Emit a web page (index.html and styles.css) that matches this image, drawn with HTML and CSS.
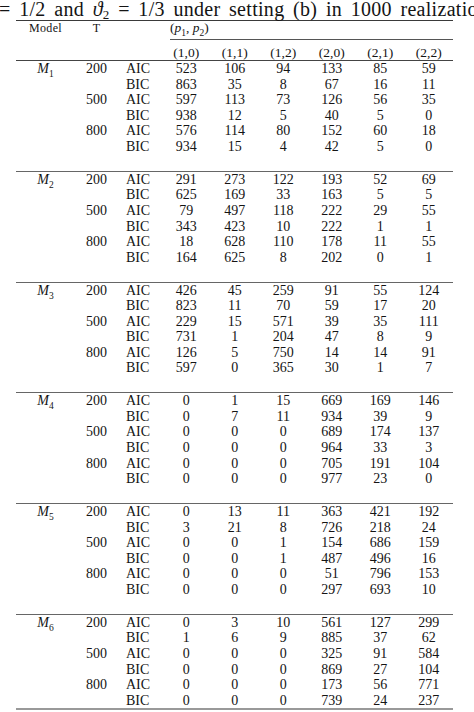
FILE: index.html
```html
<!DOCTYPE html>
<html>
<head>
<meta charset="utf-8">
<link rel="stylesheet" href="styles.css">
</head>
<body>
<div class="title">= 1/2 and <i>ϑ</i><sub>2</sub> = 1/3 under setting (b) in 1000 realizations</div>
<table class="tbl">
  <colgroup>
    <col class="c-model"><col class="c-t"><col class="c-crit">
    <col class="c-num"><col class="c-num"><col class="c-num"><col class="c-num"><col class="c-num"><col class="c-num">
  </colgroup>
  <thead>
    <tr class="h1">
      <th class="small">Model</th><th class="small">T</th><th></th>
      <th colspan="6" class="pp"><div class="pp-in">(<i>p</i><sub>1</sub>, <i>p</i><sub>2</sub>)</div></th>
    </tr>
    <tr class="h2">
      <th></th><th></th><th></th>
      <th>(1,0)</th><th>(1,1)</th><th>(1,2)</th><th>(2,0)</th><th>(2,1)</th><th>(2,2)</th>
    </tr>
  </thead>
  <tbody id="body"></tbody>
</table>
<script src="app.js"></script>
</body>
</html>
```
FILE: app.js
```js
const data = [
  [[523,106,94,133,85,59],[863,35,8,67,16,11],[597,113,73,126,56,35],[938,12,5,40,5,0],[576,114,80,152,60,18],[934,15,4,42,5,0]],
  [[291,273,122,193,52,69],[625,169,33,163,5,5],[79,497,118,222,29,55],[343,423,10,222,1,1],[18,628,110,178,11,55],[164,625,8,202,0,1]],
  [[426,45,259,91,55,124],[823,11,70,59,17,20],[229,15,571,39,35,111],[731,1,204,47,8,9],[126,5,750,14,14,91],[597,0,365,30,1,7]],
  [[0,1,15,669,169,146],[0,7,11,934,39,9],[0,0,0,689,174,137],[0,0,0,964,33,3],[0,0,0,705,191,104],[0,0,0,977,23,0]],
  [[0,13,11,363,421,192],[3,21,8,726,218,24],[0,0,1,154,686,159],[0,0,1,487,496,16],[0,0,0,51,796,153],[0,0,0,297,693,10]],
  [[0,3,10,561,127,299],[1,6,9,885,37,62],[0,0,0,325,91,584],[0,0,0,869,27,104],[0,0,0,173,56,771],[0,0,0,739,24,237]]
];
const Ts = [200, 500, 800];
const body = document.getElementById('body');
let html = '';
data.forEach((g, gi) => {
  g.forEach((row, ri) => {
    const cls = [];
    if (gi === data.length - 1 && ri === 5) cls.push('last');
    html += '<tr class="r ' + cls.join(' ') + '">';
    html += '<td class="m">' + (ri === 0 ? '<i>M</i><sub>' + (gi + 1) + '</sub>' : '') + '</td>';
    html += '<td class="t">' + (ri % 2 === 0 ? Ts[ri / 2] : '') + '</td>';
    html += '<td class="crit">' + (ri % 2 === 0 ? 'AIC' : 'BIC') + '</td>';
    row.forEach(v => { html += '<td class="n">' + v + '</td>'; });
    html += '</tr>';
  });
  if (gi < data.length - 1) {
    html += '<tr class="gap"><td colspan="9"></td></tr>';
  }
});
body.innerHTML = html;
```
FILE: styles.css
```css
html, body {
  margin: 0;
  padding: 0;
  background: #fff;
}
body {
  width: 474px;
  height: 712px;
  overflow: hidden;
  color: #141414;
  font-family: "Liberation Serif", "DejaVu Serif", serif;
}
.title {
  height: 20px;
  font-size: 20px;
  line-height: 19px;
  letter-spacing: 0.3px;
  word-spacing: 3.3px;
  white-space: nowrap;
  overflow-x: clip;
  overflow-y: visible;
  margin-left: -1px;
}
.title sub {
  font-size: 13px;
  line-height: 0;
  vertical-align: -3px;
}
.tbl {
  margin-left: 16px;
  width: 437px;
  table-layout: fixed;
  border-collapse: collapse;
  border-top: 1.5px solid #3a3a3a;
  font-size: 14px;
}
.c-model { width: 59px; }
.c-t { width: 43px; }
.c-crit { width: 44px; }
.c-num { width: 48.5px; }
.tbl th, .tbl td {
  padding: 0;
  font-weight: normal;
}
.h1 th {
  height: 19px;
  vertical-align: top;
  line-height: 14px;
}
.h1 .small {
  font-size: 12px;
  letter-spacing: 0.3px;
  text-align: center;
}
.h1 .pp {
  text-align: left;
  font-size: 13.5px;
}
.pp-in {
  margin-left: 8px;
  height: 19px;
  box-sizing: border-box;
  border-bottom: 1.2px solid #555;
}
.pp-in sub {
  font-size: 9.5px;
  line-height: 0;
}
.h2 th {
  height: 20px;
  vertical-align: bottom;
  line-height: 15px;
  font-size: 13.5px;
  text-align: center;
  border-bottom: 1.5px solid #444;
}
.r td {
  height: 15.6px;
  line-height: 15.6px;
  white-space: nowrap;
}
.m { text-align: center; }
.m sub { font-size: 9.5px; line-height: 0; }
.t { text-align: center; }
.crit { text-align: left; padding-left: 8px !important; }
.n { text-align: center; }
.gap td {
  height: 16.2px;
  border-bottom: 1.3px solid #666;
}
.last td {
  border-bottom: 2px solid #999;
}
```
